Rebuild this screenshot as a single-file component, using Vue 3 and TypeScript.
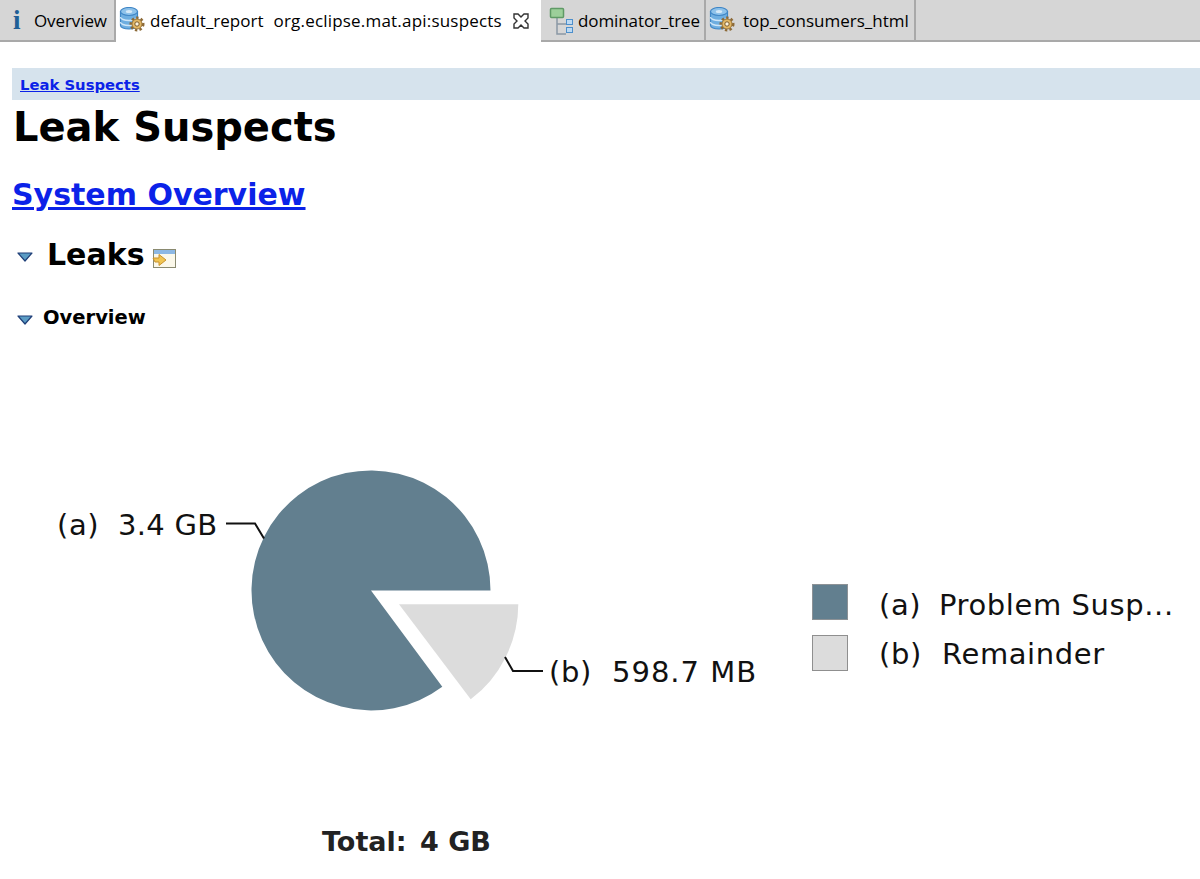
<script setup lang="ts">
const legend = [
  { label: '(a)', name: 'Problem Susp...', nameX: 939, y: 584, textY: 615, fill: '#627f8f', stroke: '#8d9296' },
  { label: '(b)', name: 'Remainder', nameX: 942, y: 635, textY: 664, fill: '#dcdcdc', stroke: '#8f8f8f' },
]
</script>

<template>
  <div class="page">
    <div class="tabs">
      <div class="tab first">
        <span class="info">i</span>
        <span class="first-name">Overview</span>
      </div>
      <div class="tab active">
        <svg width="28" height="28" viewBox="0 0 28 28">
          <use href="#dbgear" />
        </svg>
        <span>default_report</span>
        <span class="sub">org.eclipse.mat.api:suspects</span>
        <svg class="close" width="18" height="18" viewBox="0 0 18 18">
          <path d="M2 2h4l3 3 3-3h4v4l-3 3 3 3v4h-4l-3-3-3 3H2v-4l3-3-3-3z" fill="#fff" stroke="#333" stroke-width="1.400" />
        </svg>
      </div>
      <div class="tab dom">
        <svg width="24" height="28" viewBox="0 0 24 28">
          <path d="M8 10v17h9M8 17h9" fill="none" stroke="#8b98a5" stroke-width="1.500" />
          <rect x="1.500" y="1.500" width="13" height="9" rx="1" fill="#9ccf9a" stroke="#5f9a66" stroke-width="1.500" />
          <rect x="17.500" y="12.500" width="6" height="5" fill="#bcd9f2" stroke="#4d8fcb" />
          <rect x="17.500" y="20.500" width="6" height="5" fill="#bcd9f2" stroke="#4d8fcb" />
        </svg>
        <span>dominator_tree</span>
      </div>
      <div class="tab top">
        <svg width="28" height="28" viewBox="0 0 28 28">
          <use href="#dbgear" />
        </svg>
        <span>top_consumers_html</span>
      </div>
    </div>

    <svg width="0" height="0" class="defs">
      <defs>
        <g id="dbgear">
          <path d="M1.500 4.500v14c0 2 3.800 3.500 8.500 3.500s8.500-1.500 8.500-3.500v-14z" fill="#6eaee0" stroke="#3f86c6" stroke-width="1.200" />
          <path d="M1.500 10c0 2 3.800 3.500 8.500 3.500s8.500-1.500 8.500-3.500M1.500 15c0 2 3.800 3.500 8.500 3.500s8.500-1.500 8.500-3.500" fill="none" stroke="#cfe6f8" stroke-width="1.400" />
          <ellipse cx="10" cy="4.500" rx="8.500" ry="4" fill="#8ec2ea" stroke="#3f86c6" stroke-width="1.200" />
          <ellipse cx="10" cy="4.500" rx="3.200" ry="1.500" fill="#d5e9f8" />
          <circle cx="18" cy="17" r="6.200" fill="none" stroke="#8c6a38" stroke-width="2.600" stroke-dasharray="2.400 2.200" />
          <circle cx="18" cy="17" r="5" fill="#e2b866" stroke="#9a7336" />
          <circle cx="18" cy="17" r="2.200" fill="#fbf3df" stroke="#7a5a2a" />
        </g>
      </defs>
    </svg>

    <div class="content">
      <div class="crumb"><a href="#">Leak Suspects</a></div>
      <h1>Leak Suspects</h1>
      <h2><a href="#">System Overview</a></h2>

      <div class="section leaks">
        <svg class="arrow" width="16" height="10" viewBox="0 0 16 10">
          <path d="M1 1h14L8 9z" fill="#5b9cc4" stroke="#1f3f78" stroke-width="1.200" stroke-linejoin="round" />
        </svg>
        <h3>Leaks</h3>
        <svg class="winicon" width="25" height="21" viewBox="0 0 25 21">
          <rect x="1.500" y="1.500" width="22" height="18" fill="#fbf8ea" stroke="#8a8a70" />
          <rect x="2" y="2" width="21" height="4" fill="#8db8e4" />
          <path d="M1 10h6V6.500l7 5.500-7 5.500V14H3z" fill="#f0c552" stroke="#c9922c" />
        </svg>
      </div>

      <div class="section over">
        <svg class="arrow" width="16" height="10" viewBox="0 0 16 10">
          <path d="M1 1h14L8 9z" fill="#5b9cc4" stroke="#1f3f78" stroke-width="1.200" stroke-linejoin="round" />
        </svg>
        <h4>Overview</h4>
      </div>

      <svg class="chart" width="1200" height="537" viewBox="0 342 1200 537">
        <path d="M371 590.500H490.500A119.500 120 0 1 0 442.300 686.700Z" fill="#627f8f" />
        <path d="M399 604.300H518.300A119.500 120 0 0 1 470.700 699.300Z" fill="#dcdcdc" />
        <path d="M226 523.500h29l9 15M505 657l8 14h30" fill="none" stroke="#111" stroke-width="2" />
        <text y="535" class="lab"><tspan x="57">(a)</tspan><tspan x="118" class="tight">3.4 GB</tspan></text>
        <text y="682" class="lab"><tspan x="549">(b)</tspan><tspan x="612" class="wide">598.7 MB</tspan></text>
        <g v-for="item in legend" :key="item.label">
          <rect x="812.500" :y="item.y + 0.5" width="35" height="35" :fill="item.fill" :stroke="item.stroke" />
          <text :y="item.textY" class="lab"><tspan x="879">{{ item.label }}</tspan><tspan :x="item.nameX">{{ item.name }}</tspan></text>
        </g>
        <text y="851" class="total"><tspan x="322">Total:</tspan><tspan x="420">4 GB</tspan></text>
      </svg>
    </div>
  </div>
</template>

<style>
html,
body {
  margin: 0;
  background: #fff;
}
</style>

<style scoped>
.page {
  width: 1200px;
  height: 879px;
  overflow: hidden;
  font-family: "DejaVu Sans", sans-serif;
  color: #000;
}
.defs {
  display: block;
  height: 0;
}
.tabs {
  display: flex;
  height: 42px;
  background: #d6d6d6;
  font-family: "Open Sans", sans-serif;
  font-size: 17px;
  box-shadow: inset 0 -2px 0 #a9a9a9;
}
.tab {
  display: flex;
  align-items: center;
  height: 42px;
  box-sizing: border-box;
  padding-bottom: 1px;
  border-right: 2px solid #a9a9a9;
}
.first {
  width: 116px;
  padding-left: 13px;
}
.info {
  width: 21px;
  font: bold 27px "Liberation Serif", serif;
  color: #1f5f96;
}
.first-name {
  letter-spacing: -0.1px;
}
.active {
  width: 425px;
  background: #fff;
  border-right: none;
  padding-left: 3px;
  gap: 3px;
}
.sub {
  margin-left: 7px;
  letter-spacing: 0.2px;
}
.close {
  margin-left: 7px;
}
.dom {
  width: 165px;
  padding-left: 8px;
  gap: 5px;
  letter-spacing: -0.1px;
}
.top {
  width: 210px;
  padding-left: 3px;
  gap: 6px;
}
.content {
  padding-top: 26px;
}
.crumb {
  margin-left: 12px;
  height: 32px;
  line-height: 33px;
  padding-left: 8px;
  background: #d6e3ed;
  font-size: 14.800px;
  font-weight: bold;
}
a {
  color: #0b22e8;
}
h1 {
  margin: 1px 0 0 13px;
  font-size: 40px;
  line-height: 52px;
}
h2 {
  margin: 22px 0 0 12px;
  font-size: 30px;
  line-height: 40px;
}
.section {
  display: flex;
  align-items: center;
  margin-left: 17px;
}
.arrow {
  margin-top: 6px;
}
.leaks {
  margin-top: 19px;
  height: 40px;
}
h3 {
  margin: 0 0 0 14px;
  font-size: 30px;
}
.winicon {
  margin: 9px 0 0 7px;
}
.over {
  margin-top: 28px;
  height: 30px;
}
h4 {
  margin: 0 0 0 10px;
  font-size: 19.500px;
}
.chart {
  display: block;
  margin-top: 10px;
}
.lab {
  font-family: "DejaVu Sans", sans-serif;
  font-size: 29px;
  letter-spacing: 0.6px;
  fill: #111;
}
.wide {
  letter-spacing: 1px;
}
.tight {
  letter-spacing: 0.3px;
}
.total {
  font-family: "DejaVu Sans", sans-serif;
  font-weight: bold;
  font-size: 27px;
  fill: #222;
}
</style>
